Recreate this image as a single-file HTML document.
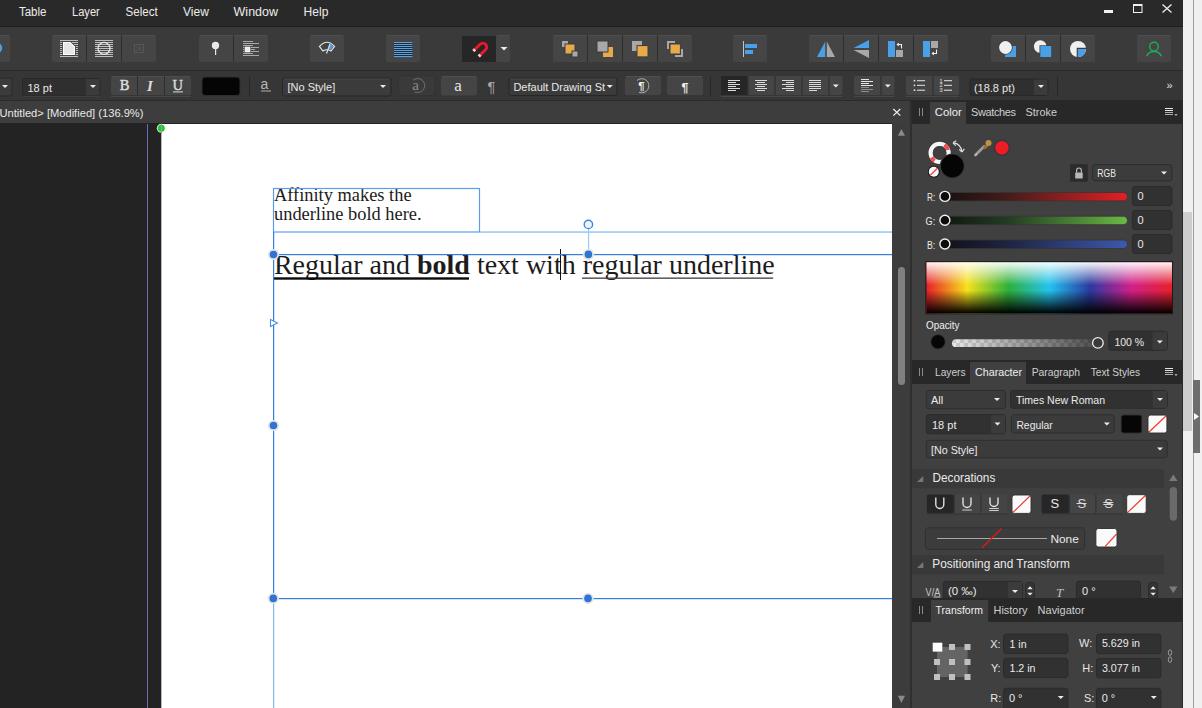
<!DOCTYPE html>
<html><head><meta charset="utf-8">
<style>
*{box-sizing:border-box;margin:0;padding:0}
html,body{width:1202px;height:708px;overflow:hidden;background:#393939;font-family:"Liberation Sans",sans-serif;color:#e6e6e6}
.a{position:absolute}
.t{position:absolute;white-space:pre;line-height:1}
#menubar{left:0;top:0;width:1183px;height:26px;background:#292929}
.menu{top:6px;font-size:12.3px;color:#ececec}
#toolbar{left:0;top:26px;width:1183px;height:45px;background:#3a3a3a;border-top:1px solid #1f1f1f;border-bottom:1px solid #2a2a2a}
#ctx{left:0;top:71px;width:1183px;height:30px;background:#363636;border-bottom:1px solid #2b2b2b}
.btn{position:absolute;background:#464646;border-radius:2px;box-shadow:inset 0 1px 0 #4d4d4d, 0 1px 0 #2e2e2e}
.div{position:absolute;width:1px;background:#333}
.dd{position:absolute;background:#2f2f2f;border:1px solid #262626;border-radius:3px;box-shadow:0 1px 0 #404040}
.arr{position:absolute;width:0;height:0;border-left:4px solid transparent;border-right:4px solid transparent;border-top:4px solid #e0e0e0}
</style></head><body>

<!-- Menu bar -->
<div class="a" id="menubar"></div>
<svg class="a" style="left:0;top:0" width="400" height="26" font-family="Liberation Sans, sans-serif" font-size="12" fill="#ececec">
 <text x="19" y="16.2" textLength="27.4" lengthAdjust="spacingAndGlyphs">Table</text>
 <text x="72" y="16.2" textLength="27.8" lengthAdjust="spacingAndGlyphs">Layer</text>
 <text x="125.6" y="16.2" textLength="32.2" lengthAdjust="spacingAndGlyphs">Select</text>
 <text x="183" y="16.2" textLength="25.8" lengthAdjust="spacingAndGlyphs">View</text>
 <text x="233.6" y="16.2" textLength="44.4" lengthAdjust="spacingAndGlyphs">Window</text>
 <text x="303.6" y="16.2" textLength="24.8" lengthAdjust="spacingAndGlyphs">Help</text>
</svg>

<!-- right light strip -->
<div class="a" style="left:1183px;top:0;width:19px;height:708px;background:#f0f0f0"></div>
<div class="a" style="left:1183px;top:212px;width:9px;height:219px;background:#cdcdcd"></div>
<div class="a" style="left:1193px;top:0;width:1px;height:708px;background:#a0a0a0"></div>
<div class="a" style="left:1193px;top:380px;width:7px;height:73px;background:#6d6d6d"></div>
<svg class="a" style="left:1190px;top:405px" width="12" height="20"><path d="M4 8 L9 11.5 L4 15 Z" fill="#fff"/></svg>

<!-- Toolbar -->
<div class="a" id="toolbar"></div>
<!-- Context bar -->
<div class="a" id="ctx"></div>
<!--TOOLBAR-->
<svg class="a" style="left:0;top:0" width="1183" height="101" viewBox="0 0 1183 101">
<defs>
 <linearGradient id="btng" x1="0" y1="0" x2="0" y2="1"><stop offset="0" stop-color="#4a4a4a"/><stop offset="0.08" stop-color="#464646"/><stop offset="1" stop-color="#434343"/></linearGradient>
</defs>
<g fill="#454545">
 <!-- toolbar button groups y 35-62 -->
 <rect x="-4" y="35" width="14" height="27" rx="2"/>
 <rect x="52" y="35" width="104" height="27" rx="2"/>
 <rect x="199" y="35" width="69" height="27" rx="2"/>
 <rect x="310" y="35" width="34" height="27" rx="2"/>
 <rect x="386" y="35" width="34" height="27" rx="2"/>
 <rect x="496" y="35" width="14" height="27" rx="2"/>
 <rect x="553" y="35" width="139" height="27" rx="2"/>
 <rect x="733" y="35" width="34" height="27" rx="2"/>
 <rect x="809" y="35" width="139" height="27" rx="2"/>
 <rect x="991" y="35" width="104" height="27" rx="2"/>
 <rect x="1137" y="35" width="34" height="27" rx="2"/>
</g>
<g fill="#4d4d4d">
 <rect x="0" y="35" width="9" height="1"/>
 <rect x="53" y="35" width="102" height="1"/>
 <rect x="200" y="35" width="67" height="1"/>
 <rect x="311" y="35" width="32" height="1"/>
 <rect x="387" y="35" width="32" height="1"/>
 <rect x="497" y="35" width="12" height="1"/>
 <rect x="554" y="35" width="137" height="1"/>
 <rect x="734" y="35" width="32" height="1"/>
 <rect x="810" y="35" width="137" height="1"/>
 <rect x="992" y="35" width="102" height="1"/>
 <rect x="1138" y="35" width="32" height="1"/>
</g>
<!-- magnet active button -->
<rect x="462" y="36" width="34" height="26" fill="#262626"/>
<!-- dividers -->
<g fill="#2e2e2e">
 <rect x="86" y="35" width="1" height="27"/><rect x="121" y="35" width="1" height="27"/>
 <rect x="233" y="35" width="1" height="27"/>
 <rect x="587" y="35" width="1" height="27"/><rect x="622" y="35" width="1" height="27"/><rect x="657" y="35" width="1" height="27"/>
 <rect x="843" y="35" width="1" height="27"/><rect x="878" y="35" width="1" height="27"/><rect x="913" y="35" width="1" height="27"/>
 <rect x="1025" y="35" width="1" height="27"/><rect x="1060" y="35" width="1" height="27"/>
</g>
<!-- partial blue icon at left -->
<path d="M-3 44 a4 4 0 1 1 0 8" fill="none" stroke="#4aa0e8" stroke-width="2.5"/>

<!-- icon: wrap page -->
<g fill="#bdbdbd">
 <rect x="60" y="40" width="18" height="1"/><rect x="60" y="42" width="18" height="1"/><rect x="60" y="44" width="18" height="1"/><rect x="60" y="46" width="18" height="1"/><rect x="60" y="48" width="18" height="1"/><rect x="60" y="50" width="18" height="1"/><rect x="60" y="52" width="18" height="1"/><rect x="60" y="54" width="18" height="1"/><rect x="60" y="56" width="18" height="1"/>
</g>
<path d="M63.5 42.5 H70 L74.5 47 V54.5 H63.5 Z" fill="#e6e6e6" stroke="#fff" stroke-width="1.2"/>
<path d="M62.5 41.5 H70.5 L75.5 46.5 V55.5 H62.5 Z" fill="none" stroke="#454545" stroke-width="0.8"/>
<!-- icon: wrap circle -->
<g fill="#bdbdbd">
 <rect x="95" y="40" width="18" height="1"/><rect x="95" y="42" width="18" height="1"/><rect x="95" y="44" width="18" height="1"/><rect x="95" y="46" width="18" height="1"/><rect x="95" y="48" width="18" height="1"/><rect x="95" y="50" width="18" height="1"/><rect x="95" y="52" width="18" height="1"/><rect x="95" y="54" width="18" height="1"/><rect x="95" y="56" width="18" height="1"/>
</g>
<circle cx="104" cy="48.3" r="6" fill="none" stroke="#e6e6e6" stroke-width="1.2"/>
<!-- icon: disabled x -->
<g opacity="0.35">
 <rect x="134.5" y="44.5" width="9" height="8" fill="none" stroke="#777" stroke-width="1"/>
 <path d="M136.5 46.5 L141.5 50.5 M141.5 46.5 L136.5 50.5" stroke="#777" stroke-width="1"/>
</g>
<!-- pin -->
<circle cx="215.5" cy="45.5" r="3.7" fill="#e8e8e8"/>
<rect x="215" y="46" width="1.2" height="9" fill="#e8e8e8"/>
<!-- wrap square icon -->
<g fill="#a8a8a8">
 <rect x="243" y="41" width="10" height="1"/><rect x="243" y="43" width="16" height="1"/><rect x="243" y="45" width="10" height="1"/>
 <rect x="251" y="47" width="8" height="1"/><rect x="251" y="49" width="4" height="1"/><rect x="251" y="51" width="8" height="1"/>
 <rect x="243" y="47" width="1" height="1"/><rect x="243" y="49" width="1" height="1"/><rect x="243" y="51" width="1" height="1"/>
 <rect x="243" y="53" width="10" height="1"/><rect x="243" y="55" width="16" height="1"/>
</g>
<rect x="245" y="47" width="5" height="5" fill="#ececec" stroke="#fff" stroke-width="0.6"/>
<!-- wiper icon -->
<path d="M319.5 46.5 Q327 38 334.5 46.5 L331 51 Q327 48.5 323 51 Z" fill="none" stroke="#e6e6e6" stroke-width="1.2"/>
<path d="M329.5 44 Q332.5 45 333.5 46.6 L330.5 50 Q329 49 328 49 Z" fill="#4aa0e8"/>
<path d="M330 44 L326.5 53.5" stroke="#e6e6e6" stroke-width="1.1"/>
<!-- blue lines icon -->
<rect x="394" y="42" width="18.5" height="15" fill="#1c1c1c"/>
<g fill="#5aa2e6">
 <rect x="394" y="42" width="18.5" height="1.1"/><rect x="394" y="44" width="18.5" height="1.1"/><rect x="394" y="46" width="18.5" height="1.1"/><rect x="394" y="48" width="18.5" height="1.1"/><rect x="394" y="50" width="18.5" height="1.1"/><rect x="394" y="52" width="18.5" height="1.1"/><rect x="394" y="54" width="18.5" height="1.1"/><rect x="394" y="56" width="18.5" height="1.1"/>
</g>
<!-- magnet -->
<path d="M473.4 51.03 L480.11 44.31 A3.8 3.8 0 0 1 485.49 49.69 L478.77 56.41" fill="none" stroke="#e8182f" stroke-width="3"/>
<path d="M473.4 51.03 L475 49.43 M478.77 56.41 L480.37 54.81" stroke="#e6dede" stroke-width="3"/>
<path d="M500.5 47 H507.5 L504 50.5 Z" fill="#f0f0f0"/>
<!-- arrange icons -->
<g stroke="#3c3c3c" stroke-width="1">
 <rect x="562" y="41" width="6" height="6" fill="#a8a8a8" stroke="none"/>
 <rect x="565" y="44" width="10" height="10" fill="#e8aa48"/>
 <rect x="572" y="51" width="6" height="6" fill="#a8a8a8"/>
 <rect x="603" y="47" width="10" height="10" fill="#e8aa48" stroke="none"/>
 <rect x="597" y="41" width="11" height="11" fill="#a8a8a8"/>
 <rect x="632" y="41" width="10" height="10" fill="#a8a8a8" stroke="none"/>
 <rect x="637" y="45.6" width="11" height="11.3" fill="#e8aa48"/>
 <rect x="667" y="41" width="3" height="3" fill="none" stroke="none"/>
</g>
<path d="M667 49 V41 H675 V43 H669 V49 Z" fill="#a8a8a8"/>
<path d="M683 49 V57 H675 V55 H681 V49 Z" fill="#a8a8a8"/>
<rect x="670" y="44" width="10.4" height="10" fill="#e8aa48" stroke="#3c3c3c" stroke-width="1"/>
<!-- align left icon -->
<rect x="743" y="41" width="1" height="16" fill="#c4c4c4"/>
<rect x="745" y="44" width="12" height="4" fill="#4aa0e8"/>
<rect x="745" y="50" width="8" height="4" fill="#4aa0e8"/>
<!-- flip h -->
<path d="M825.2 41.5 V57 H817 Z" fill="#4aa0e8"/>
<path d="M826.8 41.5 V57 H835 Z" fill="#a8a8a8"/>
<!-- flip v -->
<path d="M869 40 V48 H853.5 Z" fill="#4aa0e8"/>
<path d="M853.5 50 H869 V58 Z" fill="#a8a8a8"/>
<!-- rotate ccw -->
<rect x="888" y="41" width="7" height="16" fill="#4aa0e8"/>
<rect x="896" y="50" width="7" height="7" fill="#a8a8a8"/>
<path d="M901.5 48.5 V44.5 H898" fill="none" stroke="#f0f0f0" stroke-width="1.1"/>
<path d="M896.5 44.5 L898.8 42.5 V46.5 Z" fill="#f0f0f0"/>
<!-- rotate cw -->
<rect x="923" y="41" width="7" height="16" fill="#4aa0e8"/>
<rect x="931" y="41" width="7" height="7" fill="#a8a8a8"/>
<path d="M936.5 49.5 V53.5 H933" fill="none" stroke="#f0f0f0" stroke-width="1.1"/>
<path d="M931.5 53.5 L933.8 51.5 V55.5 Z" fill="#f0f0f0"/>
<!-- boolean add -->
<path d="M1005 46 H1016 V57 H1005 Z" fill="#4aa0e8"/>
<circle cx="1005.5" cy="47.5" r="7.2" fill="#3c3c3c"/>
<circle cx="1005.5" cy="47.5" r="6.4" fill="#f0f0f0"/>
<!-- boolean subtract -->
<circle cx="1040.2" cy="46.5" r="6.3" fill="#f0f0f0"/>
<rect x="1039.5" y="45.3" width="12" height="12" fill="#3c3c3c"/>
<rect x="1040.3" y="46" width="10.9" height="11" fill="#4aa0e8"/>
<!-- boolean intersect -->
<circle cx="1078" cy="49" r="8" fill="#f0f0f0"/>
<path d="M1077.3 57.5 V48.3 H1086.5" fill="none" stroke="#3c3c3c" stroke-width="1.2"/>
<path d="M1078 49 H1086 A8 8 0 0 1 1078 57 Z" fill="#4aa0e8"/>
<!-- person -->
<circle cx="1154" cy="46.6" r="4.3" fill="none" stroke="#1faa5a" stroke-width="1.4"/>
<path d="M1146.6 56.2 A8.2 8.2 0 0 1 1161.4 56.2" fill="none" stroke="#1faa5a" stroke-width="1.4"/>
<!-- window controls -->
<rect x="1104" y="10" width="9" height="3" fill="#f0f0f0"/>
<rect x="1133.5" y="4.5" width="8.5" height="8" fill="none" stroke="#f0f0f0" stroke-width="1"/>
<rect x="1133" y="4" width="9" height="2" fill="#f0f0f0"/>
<path d="M1162.5 4.5 L1171.5 12.5 M1171.5 4.5 L1162.5 12.5" stroke="#f0f0f0" stroke-width="1.3"/>
</svg>

<!--/TOOLBAR-->
<!--CTX-->
<svg class="a" style="left:0;top:0" width="1183" height="101" viewBox="0 0 1183 101" font-family="Liberation Sans, sans-serif">
<!-- field styles -->
<g>
 <!-- left partial dropdown -->
 <rect x="-6" y="78" width="18" height="18" rx="2.5" fill="#3b3b3b" stroke="#2a2a2a" stroke-width="1"/>
 <path d="M2 85 H8 L5 88 Z" fill="#ececec"/>
 <!-- font size combo -->
 <rect x="22.5" y="78.5" width="77.5" height="17.5" rx="2.5" fill="#2f2f2f" stroke="#282828" stroke-width="1"/>
 <rect x="86" y="79" width="13.5" height="16.5" fill="#3b3b3b"/>
 <path d="M90 85 H96 L93 88 Z" fill="#ececec"/>
 <text x="27.5" y="91.5" font-size="11" fill="#e8e8e8">18 pt</text>
 <rect x="23" y="96" width="77" height="1" fill="#3e3e3e"/>
 <!-- BIU -->
 <rect x="111" y="76" width="80" height="19" rx="2" fill="#454545"/>
 <rect x="112" y="76" width="78" height="1" fill="#4d4d4d"/>
 <rect x="111" y="96" width="80" height="1" fill="#474747"/>
 <rect x="137" y="76" width="1" height="19" fill="#2d2d2d"/>
 <rect x="164" y="76" width="1" height="19" fill="#2d2d2d"/>
 <text x="119.8" y="90.4" font-family="Liberation Serif" font-size="14.5" fill="#dcdcdc" stroke="#dcdcdc" stroke-width="0.5">B</text>
 <text x="147" y="90.6" font-family="Liberation Serif" font-style="italic" font-weight="bold" font-size="15" fill="#dcdcdc">I</text>
 <text x="172.6" y="90.2" font-family="Liberation Serif" font-size="14.5" fill="#dcdcdc" stroke="#dcdcdc" stroke-width="0.4">U</text>
 <rect x="173" y="91.4" width="10" height="1" fill="#dcdcdc"/>
 <!-- swatch -->
 <rect x="202" y="77" width="38" height="18.5" rx="3" fill="#050505" stroke="#2e2e2e" stroke-width="1"/>
 <!-- separator -->
 <rect x="249" y="77" width="1" height="19.5" fill="#262626"/>
 <!-- a underline -->
 <text x="260.6" y="89" font-family="Liberation Sans" font-size="14" fill="#b8b8b8">a</text>
 <rect x="261" y="90.5" width="10" height="1" fill="#b0b0b0"/>
 <!-- No style dropdown -->
 <rect x="282.5" y="78" width="108.5" height="18" rx="2.5" fill="#3b3b3b" stroke="#262626" stroke-width="1"/>
 <rect x="284" y="78.6" width="105.5" height="1" fill="#474747"/>
 <text x="287.5" y="90.6" font-size="11" fill="#e8e8e8">[No Style]</text>
 <path d="M380 85 H386 L383 88 Z" fill="#ececec"/>
 <!-- disabled circled a button -->
 <rect x="398.5" y="76" width="36.5" height="19.5" rx="2" fill="#3a3a3a" stroke="#333" stroke-width="1"/>
 <text x="412.3" y="90.3" font-family="Liberation Serif" font-size="15" fill="#8a8a8a">a</text>
 <path d="M413 80.3 A7 7 0 1 1 414.5 91.8" fill="none" stroke="#707070" stroke-width="1"/>
 <!-- a button -->
 <rect x="441" y="76" width="36" height="19.5" rx="2" fill="#454545"/>
 <rect x="442" y="76" width="34" height="1" fill="#4d4d4d"/>
 <text x="454.2" y="91.3" font-family="Liberation Serif" font-size="17" fill="#e6e6e6">a</text>
 <!-- pilcrow -->
 <text x="487.6" y="92" font-family="Liberation Sans" font-size="14.5" fill="#a8a8a8">¶</text>
 <!-- default drawing dropdown -->
 <rect x="509" y="78" width="108" height="17.5" rx="2.5" fill="#3b3b3b" stroke="#262626" stroke-width="1"/>
 <rect x="510.5" y="78.6" width="105" height="1" fill="#474747"/>
 <text x="513.4" y="90.6" font-size="11" fill="#e8e8e8">Default Drawing St</text>
 <path d="M606.8 85 H612.8 L609.8 88 Z" fill="#ececec"/>
 <!-- pilcrow circle button -->
 <rect x="625" y="76" width="36" height="19" rx="2" fill="#454545"/>
 <rect x="626" y="76" width="34" height="1" fill="#4f4f4f"/>
 <path d="M637 80.5 A7.1 7.1 0 1 1 639 92.3" fill="none" stroke="#b0b0b0" stroke-width="1"/>
 <text x="638.3" y="90.3" font-family="Liberation Sans" font-weight="bold" font-size="11.5" fill="#f0f0f0">¶</text>
 <!-- pilcrow button -->
 <rect x="667" y="76" width="36" height="19" rx="2" fill="#454545"/>
 <rect x="668" y="76" width="34" height="1" fill="#4f4f4f"/>
 <text x="681.5" y="91.8" font-family="Liberation Sans" font-weight="bold" font-size="12.5" fill="#f0f0f0">¶</text>
 <!-- separator -->
 <rect x="710" y="77" width="1" height="19.5" fill="#262626"/>
 <!-- align group -->
 <rect x="721" y="76" width="121.5" height="19" rx="2" fill="#454545"/>
 <rect x="721" y="96" width="121.5" height="1" fill="#474747"/>
 <rect x="721" y="76" width="26.5" height="19" fill="#262626"/>
 <rect x="747.5" y="76" width="1" height="19" fill="#2d2d2d"/>
 <rect x="774.5" y="76" width="1" height="19" fill="#2d2d2d"/>
 <rect x="801.5" y="76" width="1" height="19" fill="#2d2d2d"/>
 <rect x="828.5" y="76" width="1" height="19" fill="#2d2d2d"/>
 <g fill="#dcdcdc">
  <rect x="728" y="80" width="12" height="1"/><rect x="728" y="82" width="8" height="1"/><rect x="728" y="84" width="12" height="1"/><rect x="728" y="86" width="8" height="1"/><rect x="728" y="88" width="12" height="1"/><rect x="728" y="90" width="8" height="1"/>
  <rect x="755" y="80" width="12" height="1"/><rect x="757" y="82" width="8" height="1"/><rect x="755" y="84" width="12" height="1"/><rect x="757" y="86" width="8" height="1"/><rect x="755" y="88" width="12" height="1"/><rect x="757" y="90" width="8" height="1"/>
  <rect x="782" y="80" width="12" height="1"/><rect x="786" y="82" width="8" height="1"/><rect x="782" y="84" width="12" height="1"/><rect x="786" y="86" width="8" height="1"/><rect x="782" y="88" width="12" height="1"/><rect x="786" y="90" width="8" height="1"/>
  <rect x="809" y="80" width="12" height="1"/><rect x="809" y="82" width="12" height="1"/><rect x="809" y="84" width="12" height="1"/><rect x="809" y="86" width="12" height="1"/><rect x="809" y="88" width="12" height="1"/><rect x="809" y="90" width="8" height="1"/>
 </g>
 <path d="M832.8 84.5 H838.8 L835.8 87.5 Z" fill="#ececec"/>
 <!-- para group -->
 <rect x="854" y="76" width="40.5" height="19" rx="2" fill="#454545"/>
 <rect x="854" y="96" width="40.5" height="1" fill="#474747"/>
 <rect x="880.5" y="76" width="1" height="19" fill="#2d2d2d"/>
 <g fill="#e6e6e6">
  <rect x="861" y="79" width="8" height="1"/><rect x="861" y="81" width="12" height="1"/><rect x="861" y="83" width="8" height="1"/><rect x="861" y="85" width="12" height="1"/>
 </g>
 <g fill="#8c8c8c">
  <rect x="861" y="87" width="8" height="1"/><rect x="861" y="89" width="12" height="1"/><rect x="861" y="91" width="8" height="1"/>
 </g>
 <path d="M884.8 84.5 H890.8 L887.8 87.5 Z" fill="#ececec"/>
 <!-- list group -->
 <rect x="906" y="76" width="53" height="19" rx="2" fill="#454545"/>
 <rect x="906" y="96" width="53" height="1" fill="#474747"/>
 <rect x="932.5" y="76" width="1" height="19" fill="#2d2d2d"/>
 <g fill="#e6e6e6">
  <circle cx="914.5" cy="80.7" r="0.9"/><circle cx="914.5" cy="85.3" r="0.9"/><circle cx="914.5" cy="90.2" r="0.9"/>
  <rect x="917" y="80.2" width="8" height="1"/><rect x="917" y="84.8" width="8" height="1"/><rect x="917" y="89.7" width="8" height="1"/>
  <rect x="944" y="80.2" width="8" height="1"/><rect x="944" y="84.8" width="8" height="1"/><rect x="944" y="89.7" width="8" height="1"/>
 </g>
 <text x="939.4" y="82.6" font-size="5.5" fill="#e6e6e6">1</text>
 <text x="939.4" y="87.3" font-size="5.5" fill="#e6e6e6">2</text>
 <text x="939.4" y="92.1" font-size="5.5" fill="#e6e6e6">3</text>
 <!-- leading -->
 <rect x="970" y="79" width="78" height="16.5" rx="2.5" fill="#2f2f2f" stroke="#282828" stroke-width="1"/>
 <rect x="1034" y="79.5" width="13.5" height="15.5" fill="#3b3b3b"/>
 <path d="M1038 85 H1044 L1041 88 Z" fill="#ececec"/>
 <text x="973.9" y="92" font-size="11" fill="#e8e8e8">(18.8 pt)</text>
 <rect x="1057" y="77" width="1" height="19.5" fill="#262626"/>
 <text x="1166.5" y="88.6" font-size="11" fill="#e0e0e0">»</text>
</g>
</svg>

<!--/CTX-->

<!-- Doc tab -->
<div class="a" style="left:0;top:101px;width:909px;height:22px;background:#3d3d3d"></div>
<svg class="a" style="left:0;top:101px" width="300" height="22" font-family="Liberation Sans, sans-serif"><text x="-0.5" y="15.9" font-size="11" fill="#e8e8e8" textLength="144" lengthAdjust="spacingAndGlyphs">Untitled&gt; [Modified] (136.9%)</text></svg>

<!-- Canvas -->
<div class="a" style="left:0;top:123px;width:892px;height:585px;background:#232323"></div>
<div class="a" style="left:147px;top:124px;width:1px;height:584px;background:#6b6bb3"></div>
<!--CANVAS-->
<svg class="a" style="left:150px;top:123px" width="742" height="585" viewBox="150 123 742 585">
<rect x="150" y="123" width="742" height="585" fill="#232323"/>
<rect x="161" y="124" width="731" height="584" fill="#ffffff"/>
<rect x="161" y="124" width="1" height="584" fill="#b8b8b8"/>
<!-- text 1 -->
<g font-family="Liberation Serif" fill="#1c1c1c">
<text x="274" y="201.0" font-size="18.4">Affinity makes the</text>
<text x="274" y="220.1" font-size="18.4">underline bold here.</text>
<text x="273.9" y="274.0" font-size="28" xml:space="preserve">Regular and <tspan font-weight="bold">bold</tspan> text with regular underline</text>
</g>
<rect x="274" y="277.3" width="195" height="2.4" fill="#0a0a0a"/>
<rect x="582" y="277.5" width="191.2" height="1.3" fill="#3c3c3c"/>
<!-- caret -->
<rect x="560" y="249" width="1" height="31" fill="#111"/>
<!-- frame 1 -->
<rect x="273.5" y="188.5" width="206" height="43.5" fill="none" stroke="#5a9de8" stroke-width="1.2"/>
<rect x="480" y="231.4" width="412" height="1.3" fill="#86bdf0"/>
<!-- selection -->
<rect x="273" y="254" width="619" height="1.2" fill="#2f7ee0"/>
<rect x="273" y="598" width="619" height="1.2" fill="#2f7ee0"/>
<rect x="273" y="232" width="1.2" height="366" fill="#2f7ee0"/>
<rect x="273" y="599" width="1.2" height="109" fill="#7fb8ee"/>
<rect x="588" y="229" width="1.2" height="25" fill="#9ccaf2"/>
<!-- handles -->
<g>
 <circle cx="273.5" cy="254.5" r="5.6" fill="#e4e4e4"/><circle cx="273.5" cy="254.5" r="3.8" fill="#2f74d4"/>
 <circle cx="588.4" cy="254.4" r="5.6" fill="#e4e4e4"/><circle cx="588.4" cy="254.4" r="3.8" fill="#2f74d4"/>
 <circle cx="273.5" cy="425.5" r="5.6" fill="#e4e4e4"/><circle cx="273.5" cy="425.5" r="3.8" fill="#2f74d4"/>
 <circle cx="273.3" cy="598.4" r="5.6" fill="#e4e4e4"/><circle cx="273.3" cy="598.4" r="3.8" fill="#2f74d4"/>
 <circle cx="588" cy="598.4" r="5.6" fill="#e4e4e4"/><circle cx="588" cy="598.4" r="3.8" fill="#2f74d4"/>
 <circle cx="588.4" cy="224.4" r="4.2" fill="#eef5fd" stroke="#3a86e4" stroke-width="1.4"/>
</g>
<path d="M270.5 319.5 L277.5 323 L270.5 326.5 Z" fill="#fff" stroke="#4a90e2" stroke-width="1.1"/>
<!-- green dot -->
<circle cx="161.3" cy="128.3" r="4.5" fill="#f4f4f4" opacity="0.9"/>
<circle cx="161.3" cy="128.3" r="3.5" fill="#1ccc2a"/>
<rect x="161" y="124" width="1" height="10" fill="#9a9a9a"/>
</svg>

<!--/CANVAS-->
<div class="a" style="left:892px;top:123px;width:18px;height:585px;background:#3c3c3c"></div>
<svg class="a" style="left:892px;top:123px" width="18" height="585" viewBox="892 123 18 585">
 <path d="M901.4 129 L905 135.8 H897.9 Z" fill="#8a8a8a"/>
 <rect x="898" y="267" width="7" height="118" rx="3.5" fill="#808080"/>
 <path d="M897.8 695.8 H905 L901.4 702.9 Z" fill="#8a8a8a"/>
</svg>
<svg class="a" style="left:860px;top:101px" width="50" height="22" viewBox="860 101 50 22">
 <path d="M893.3 109 L900.3 115.6 M900.3 109 L893.3 115.6" stroke="#f0f0f0" stroke-width="1.2"/>
</svg>
<div class="a" style="left:910px;top:101px;width:2px;height:607px;background:#2f2f2f"></div>

<!-- Panels -->
<div class="a" style="left:912px;top:101px;width:271px;height:607px;background:#404040"></div>
<!--P1-->
<svg class="a" style="left:912px;top:100px" width="271" height="608" viewBox="912 100 271 608" font-family="Liberation Sans, sans-serif">
<defs>
 <linearGradient id="hue" x1="0" x2="1" y1="0" y2="0">
  <stop offset="0" stop-color="#e8202a"/><stop offset="0.166" stop-color="#f6e21a"/><stop offset="0.333" stop-color="#2db03a"/>
  <stop offset="0.5" stop-color="#23c3ee"/><stop offset="0.666" stop-color="#2a3aa0"/><stop offset="0.833" stop-color="#d2208a"/><stop offset="1" stop-color="#e8202a"/>
 </linearGradient>
 <linearGradient id="vshade" x1="0" x2="0" y1="0" y2="1">
  <stop offset="0" stop-color="#fff" stop-opacity="0.95"/><stop offset="0.45" stop-color="#fff" stop-opacity="0"/>
  <stop offset="0.55" stop-color="#000" stop-opacity="0"/><stop offset="1" stop-color="#000" stop-opacity="1"/>
 </linearGradient>
 <linearGradient id="rg" x1="0" x2="1"><stop offset="0" stop-color="#161010"/><stop offset="0.35" stop-color="#421c1a"/><stop offset="1" stop-color="#e32024"/></linearGradient>
 <linearGradient id="gg" x1="0" x2="1"><stop offset="0" stop-color="#101610"/><stop offset="0.35" stop-color="#233a22"/><stop offset="1" stop-color="#6ab944"/></linearGradient>
 <linearGradient id="bg" x1="0" x2="1"><stop offset="0" stop-color="#101016"/><stop offset="0.35" stop-color="#1e2340"/><stop offset="1" stop-color="#3d59ad"/></linearGradient>
 <linearGradient id="og" x1="0" x2="1"><stop offset="0" stop-color="#e8e8e8"/><stop offset="0.5" stop-color="#9a9a9a"/><stop offset="1" stop-color="#4a4a4a"/></linearGradient>
 <pattern id="chk" width="8" height="8" patternUnits="userSpaceOnUse" x="952" y="339"><rect width="8" height="8" fill="#000" opacity="0"/><rect width="4" height="4" fill="#000" opacity="0.12"/><rect x="4" y="4" width="4" height="4" fill="#000" opacity="0.12"/></pattern>
</defs>
<!-- tab bar -->
<rect x="912" y="100.5" width="271" height="23.5" fill="#282828"/>
<rect x="930" y="102" width="36" height="22" fill="#404040"/>
<rect x="919" y="108" width="1" height="8" fill="#8a8a8a"/><rect x="922" y="108" width="1" height="8" fill="#8a8a8a"/>
<text x="934.8" y="116" font-size="11" fill="#f0f0f0" textLength="27" lengthAdjust="spacingAndGlyphs">Color</text>
<text x="971" y="116" font-size="11" fill="#cfcfcf" textLength="45">Swatches</text>
<text x="1025.6" y="116" font-size="11" fill="#cfcfcf" textLength="31.4" lengthAdjust="spacingAndGlyphs">Stroke</text>
<g fill="#e6e6e6"><rect x="1165" y="108" width="8" height="1"/><rect x="1165" y="110" width="8" height="1"/></g>
<g fill="#b0b0b0"><rect x="1165" y="112" width="8" height="1"/><rect x="1165" y="114" width="8" height="1"/></g>
<path d="M1174.5 114.2 H1177.5 L1176 116 Z" fill="#d0d0d0"/>
<rect x="1182" y="100" width="1" height="608" fill="#2a2a2a"/>
<!-- panel body -->
<rect x="912" y="124" width="270" height="236" fill="#404040"/>
<!-- stroke ring -->
<circle cx="939.6" cy="152.9" r="12" fill="#3a3a3a"/>
<circle cx="939.6" cy="152.9" r="9" fill="none" stroke="#f6f6f6" stroke-width="4.2"/>
<path d="M944.5 144.9 A9 9 0 0 1 948 150" fill="none" stroke="#f05050" stroke-width="4.2"/>
<path d="M931.5 157.5 A9 9 0 0 0 934.5 161" fill="none" stroke="#f05050" stroke-width="4.2"/>
<circle cx="939.6" cy="152.9" r="6.8" fill="#3f3f3f"/>
<!-- swap arrows -->
<path d="M953.5 142.8 Q960.5 143.5 962 151.5" fill="none" stroke="#e0e0e0" stroke-width="1.2"/>
<path d="M953 142.8 L956.2 140.8 M953 142.8 L955.8 145.6" stroke="#e0e0e0" stroke-width="1.2"/>
<path d="M962 152 L959.2 149.4 M962 152 L964.3 148.9" stroke="#e0e0e0" stroke-width="1.2"/>
<!-- fill circle -->
<circle cx="952.3" cy="166" r="12.6" fill="#383838"/>
<circle cx="952.3" cy="166" r="11.4" fill="#050505"/>
<!-- none circle -->
<circle cx="933.8" cy="171.8" r="6" fill="#151515"/>
<circle cx="933.8" cy="171.8" r="5" fill="#f8f8f8"/>
<path d="M930.2 175.4 L937.4 168.2" stroke="#f03a3a" stroke-width="1.3"/>
<!-- eyedropper -->
<path d="M975.5 155 L984 146.5" stroke="#9a9a9a" stroke-width="2.8" stroke-linecap="round"/>
<path d="M975 155.6 L977 153.6" stroke="#c8c8c8" stroke-width="1.2"/>
<path d="M983 147.5 L986.5 144 L988.5 146 L985 149.5 Z" fill="#a07028"/>
<circle cx="988.5" cy="143" r="3" fill="#c09040"/>
<!-- red circle -->
<circle cx="1001.9" cy="147.8" r="8.2" fill="#383838"/>
<circle cx="1001.9" cy="147.8" r="6.8" fill="#ee1c24"/>
<!-- lock -->
<rect x="1070" y="164.2" width="17.8" height="17.6" fill="#2c2c2c"/>
<rect x="1075.2" y="172.5" width="7.5" height="6" rx="0.6" fill="#b8b8b8"/>
<path d="M1076.6 172.8 V170.4 A2.4 2.4 0 0 1 1081.4 170.4 V172.8" fill="none" stroke="#b8b8b8" stroke-width="1.2"/>
<!-- RGB dropdown -->
<rect x="1092.5" y="164.6" width="79.4" height="16.3" rx="2.5" fill="#3c3c3c" stroke="#2c2c2c" stroke-width="1"/>
<text x="1097.3" y="177" font-size="11" fill="#eaeaea" textLength="18.6" lengthAdjust="spacingAndGlyphs">RGB</text>
<path d="M1161 171.5 H1167 L1164 174.5 Z" fill="#ececec"/>
<!-- sliders -->
<g font-size="10" fill="#ececec">
 <text x="927" y="200.9" textLength="8.2" lengthAdjust="spacingAndGlyphs">R:</text>
 <text x="925.6" y="224.7" textLength="9.6" lengthAdjust="spacingAndGlyphs">G:</text>
 <text x="927" y="248.5" textLength="8.2" lengthAdjust="spacingAndGlyphs">B:</text>
</g>
<rect x="941" y="192.4" width="186.5" height="8.5" rx="4.25" fill="url(#rg)" stroke="#353535" stroke-width="0.8"/>
<rect x="941" y="216.2" width="186.5" height="8.5" rx="4.25" fill="url(#gg)" stroke="#353535" stroke-width="0.8"/>
<rect x="941" y="240" width="186.5" height="8.5" rx="4.25" fill="url(#bg)" stroke="#353535" stroke-width="0.8"/>
<g fill="#0c0c0c" stroke="#f0f0f0" stroke-width="1.4">
 <circle cx="944.9" cy="196.4" r="5"/><circle cx="944.9" cy="220.2" r="5"/><circle cx="944.9" cy="244" r="5"/>
</g>
<g>
 <rect x="1132.3" y="186.4" width="39.7" height="19.2" rx="2.5" fill="#313131" stroke="#2a2a2a" stroke-width="0.8"/>
 <rect x="1132.3" y="210.4" width="39.7" height="19.2" rx="2.5" fill="#313131" stroke="#2a2a2a" stroke-width="0.8"/>
 <rect x="1132.3" y="234.4" width="39.7" height="19.2" rx="2.5" fill="#313131" stroke="#2a2a2a" stroke-width="0.8"/>
 <text x="1137.5" y="200.3" font-size="11" fill="#eaeaea">0</text>
 <text x="1137.5" y="224.3" font-size="11" fill="#eaeaea">0</text>
 <text x="1137.5" y="248.3" font-size="11" fill="#eaeaea">0</text>
</g>
<!-- spectrum -->
<rect x="925.4" y="261.2" width="247.6" height="53.1" fill="#1a1a1a"/>
<rect x="926.5" y="262.3" width="245.5" height="51" fill="url(#hue)"/>
<rect x="926.5" y="262.3" width="245.5" height="51" fill="url(#vshade)"/>
<!-- opacity -->
<text x="926" y="329.2" font-size="10.2" fill="#f0f0f0" textLength="33.5" lengthAdjust="spacingAndGlyphs">Opacity</text>
<circle cx="938" cy="341.8" r="7.6" fill="#333"/>
<circle cx="938" cy="341.8" r="6.8" fill="#060606"/>
<rect x="952" y="339.3" width="147" height="7.8" rx="3.9" fill="url(#og)"/>
<rect x="952" y="339.3" width="147" height="7.8" rx="3.9" fill="url(#chk)"/>
<circle cx="1097.9" cy="342.9" r="5.3" fill="#3a3a3a" stroke="#f0f0f0" stroke-width="1.3"/>
<rect x="1108.7" y="331.2" width="58.7" height="19.2" rx="2.5" fill="#313131" stroke="#2a2a2a" stroke-width="0.8"/>
<rect x="1152.5" y="331.8" width="14.5" height="18" fill="#3b3b3b"/>
<text x="1114.4" y="345.8" font-size="11" fill="#eaeaea" textLength="29.8" lengthAdjust="spacingAndGlyphs">100 %</text>
<path d="M1156.8 340.5 H1162.8 L1159.8 343.5 Z" fill="#ececec"/>
</svg>

<!--/P1-->
<!--P2-->
<svg class="a" style="left:912px;top:360px" width="271" height="238" viewBox="912 360 271 238" font-family="Liberation Sans, sans-serif">
<rect x="912" y="360" width="270" height="238" fill="#404040"/>
<!-- tab bar -->
<rect x="912" y="360" width="270" height="24" fill="#282828"/>
<rect x="970" y="362" width="56" height="22" fill="#404040"/>
<rect x="919" y="368" width="1" height="8" fill="#8a8a8a"/><rect x="922" y="368" width="1" height="8" fill="#8a8a8a"/>
<text x="935" y="375.8" font-size="11" fill="#cfcfcf" textLength="30.6" lengthAdjust="spacingAndGlyphs">Layers</text>
<text x="975" y="375.8" font-size="11" fill="#f0f0f0" textLength="47" lengthAdjust="spacingAndGlyphs">Character</text>
<text x="1031.7" y="375.8" font-size="11" fill="#cfcfcf" textLength="48.4" lengthAdjust="spacingAndGlyphs">Paragraph</text>
<text x="1090.7" y="375.8" font-size="11" fill="#cfcfcf" textLength="49.4" lengthAdjust="spacingAndGlyphs">Text Styles</text>
<g fill="#e6e6e6"><rect x="1165" y="368" width="8" height="1"/><rect x="1165" y="370" width="8" height="1"/></g>
<g fill="#b0b0b0"><rect x="1165" y="372" width="8" height="1"/><rect x="1165" y="374" width="8" height="1"/></g>
<path d="M1174.5 374.2 H1177.5 L1176 376 Z" fill="#d0d0d0"/>
<!-- row 1 -->
<rect x="926.3" y="390.4" width="79.1" height="18.3" rx="2.5" fill="#3b3b3b" stroke="#2c2c2c" stroke-width="0.9"/>
<text x="931" y="403.9" font-size="11" fill="#eaeaea">All</text>
<path d="M994 398 H1000 L997 401 Z" fill="#ececec"/>
<rect x="1010.5" y="390.5" width="156.8" height="17.8" rx="2.5" fill="#313131" stroke="#2a2a2a" stroke-width="0.9"/>
<rect x="1152.7" y="391" width="14.2" height="17" fill="#3b3b3b"/>
<text x="1015.9" y="403.9" font-size="11" fill="#eaeaea" textLength="89.2" lengthAdjust="spacingAndGlyphs">Times New Roman</text>
<path d="M1157 398 H1163 L1160 401 Z" fill="#ececec"/>
<!-- row 2 -->
<rect x="926.3" y="414.6" width="79.1" height="19.2" rx="2.5" fill="#313131" stroke="#2a2a2a" stroke-width="0.9"/>
<rect x="991" y="415.1" width="14" height="18.2" fill="#3b3b3b"/>
<text x="932" y="428.7" font-size="11" fill="#eaeaea">18 pt</text>
<path d="M994.5 422.5 H1000.5 L997.5 425.5 Z" fill="#ececec"/>
<rect x="1011.5" y="414.8" width="102.7" height="18.2" rx="2.5" fill="#3b3b3b" stroke="#2c2c2c" stroke-width="0.9"/>
<text x="1016.4" y="428.7" font-size="11" fill="#eaeaea" textLength="36.3" lengthAdjust="spacingAndGlyphs">Regular</text>
<path d="M1103.9 422.5 H1109.9 L1106.9 425.5 Z" fill="#ececec"/>
<rect x="1121.2" y="415.1" width="20.6" height="17.9" rx="2.5" fill="#060606" stroke="#2c2c2c" stroke-width="0.9"/>
<rect x="1148" y="415.1" width="18.9" height="17.9" rx="2.5" fill="#fafafa" stroke="#2c2c2c" stroke-width="0.9"/>
<path d="M1148.8 432.2 L1166.2 415.8" stroke="#f03a30" stroke-width="1.2"/>
<!-- row 3 -->
<rect x="926.3" y="440.3" width="240.9" height="17.5" rx="2.5" fill="#3b3b3b" stroke="#2c2c2c" stroke-width="0.9"/>
<text x="931" y="453.5" font-size="11" fill="#eaeaea" textLength="46.5" lengthAdjust="spacingAndGlyphs">[No Style]</text>
<path d="M1157 447.5 H1163 L1160 450.5 Z" fill="#ececec"/>
<!-- decorations header -->
<rect x="912" y="469.2" width="252" height="19" fill="#393939"/>
<path d="M917 482 L923.3 476 V482 Z" fill="#777"/>
<text x="932.5" y="481.9" font-size="12" fill="#eaeaea" textLength="62.8" lengthAdjust="spacingAndGlyphs">Decorations</text>
<!-- U group -->
<rect x="926.8" y="494.6" width="80.5" height="18.8" rx="2" fill="#454545"/>
<rect x="926.8" y="494.6" width="27" height="18.8" rx="2" fill="#262626"/>
<rect x="953.7" y="494.6" width="1" height="18.8" fill="#333"/>
<rect x="980.5" y="494.6" width="1" height="18.8" fill="#333"/>
<rect x="926.8" y="513.6" width="80.5" height="1" fill="#363636"/>
<g fill="none" stroke="#e6e6e6" stroke-width="1.35">
 <path d="M935.8 497.5 V504.5 A4 4 0 0 0 943.8 504.5 V497.5"/>
 <path d="M963 497.5 V503.5 A4 4 0 0 0 971 503.5 V497.5"/>
 <path d="M990 497.5 V502.5 A4 4 0 0 0 998 502.5 V497.5"/>
</g>
<rect x="962.3" y="509.5" width="9.4" height="1" fill="#d0d0d0"/>
<rect x="989.3" y="508" width="9.4" height="1" fill="#d0d0d0"/><rect x="989.3" y="510" width="9.4" height="1" fill="#d0d0d0"/>
<rect x="1012" y="495" width="19" height="18.4" rx="2.5" fill="#fafafa" stroke="#2c2c2c" stroke-width="0.9"/>
<path d="M1012.8 512.6 L1030.2 495.8" stroke="#f03a30" stroke-width="1.2"/>
<!-- S group -->
<rect x="1041.5" y="494.4" width="81.2" height="19" rx="2" fill="#454545"/>
<rect x="1041.5" y="494.4" width="27.3" height="19" rx="2" fill="#262626"/>
<rect x="1068.8" y="494.4" width="1" height="19" fill="#2d2d2d"/>
<rect x="1095.4" y="494.4" width="1" height="19" fill="#2d2d2d"/>
<rect x="1041.5" y="513.6" width="81.2" height="1" fill="#363636"/>
<text x="1050.6" y="508.3" font-size="13" fill="#eaeaea">S</text>
<text x="1077.5" y="508.3" font-size="13" fill="#dadada">S</text>
<rect x="1076.5" y="503" width="10" height="1" fill="#dadada"/>
<text x="1104.3" y="508.3" font-size="13" fill="#dadada">S</text>
<rect x="1103.3" y="502" width="10" height="1" fill="#dadada"/><rect x="1103.3" y="504" width="10" height="1" fill="#dadada"/>
<rect x="1126.7" y="494.7" width="19.5" height="18.7" rx="2.5" fill="#fafafa" stroke="#2c2c2c" stroke-width="0.9"/>
<path d="M1127.5 512.6 L1145.4 495.5" stroke="#f03a30" stroke-width="1.2"/>
<!-- line style box -->
<rect x="925.4" y="527.8" width="159.2" height="21.5" rx="2.5" fill="#3c3c3c" stroke="#2e2e2e" stroke-width="0.9"/>
<rect x="937" y="538" width="110" height="1" fill="#a8a8a8"/>
<path d="M982 547.8 L1001.7 528.5" stroke="#e21818" stroke-width="1.3"/>
<text x="1050.4" y="542.6" font-size="11.5" fill="#eaeaea" textLength="28.4" lengthAdjust="spacingAndGlyphs">None</text>
<rect x="1095.9" y="528.5" width="21.1" height="18.5" rx="2.5" fill="#fafafa" stroke="#2c2c2c" stroke-width="0.9"/>
<path d="M1105 546.6 L1116.6 534" stroke="#f03a30" stroke-width="1.2"/>
<!-- positioning header -->
<rect x="912" y="555.2" width="252" height="19.2" fill="#393939"/>
<path d="M917 568 L923.3 562 V568 Z" fill="#777"/>
<text x="932.3" y="567.5" font-size="12" fill="#eaeaea" textLength="137.6" lengthAdjust="spacingAndGlyphs">Positioning and Transform</text>
<!-- kerning row -->
<text x="925.6" y="596" font-size="11" fill="#c8c8c8" textLength="14.8" lengthAdjust="spacingAndGlyphs">V/A</text>
<rect x="933.5" y="596.5" width="7" height="1" fill="#c8c8c8"/>
<rect x="943.3" y="581.4" width="79.3" height="20" rx="2.5" fill="#313131" stroke="#2a2a2a" stroke-width="0.9"/>
<rect x="1007.8" y="582" width="14.3" height="19" fill="#3b3b3b"/>
<text x="948" y="594.9" font-size="11" fill="#eaeaea" textLength="28.6" lengthAdjust="spacingAndGlyphs">(0 ‰)</text>
<path d="M1012 590 H1018 L1015 593 Z" fill="#ececec"/>
<rect x="1025.5" y="582.4" width="9" height="19" rx="2.5" fill="#353535" stroke="#2a2a2a" stroke-width="0.9"/>
<path d="M1027.3 589.2 L1030 586.2 L1032.7 589.2 Z M1027.3 592.7 H1032.7 L1030 595.5 Z" fill="#ececec"/>
<text x="1056" y="596.5" font-family="Liberation Serif" font-style="italic" font-size="13" fill="#bdbdbd">T</text>
<rect x="1076.4" y="581.1" width="64.1" height="20" rx="2.5" fill="#313131" stroke="#2a2a2a" stroke-width="0.9"/>
<text x="1082" y="594.6" font-size="11" fill="#eaeaea">0 °</text>
<rect x="1148.6" y="582.4" width="9" height="19" rx="2.5" fill="#353535" stroke="#2a2a2a" stroke-width="0.9"/>
<path d="M1150.4 589.2 L1153.1 586.2 L1155.8 589.2 Z M1150.4 592.7 H1155.8 L1153.1 595.5 Z" fill="#ececec"/>
<!-- scrollbar -->
<path d="M1173.3 474.5 L1177.5 481 H1169.1 Z" fill="#7a7a7a"/>
<rect x="1169.7" y="487" width="7.3" height="33.7" rx="3.6" fill="#6a6a6a"/>
<path d="M1169.1 586.5 H1177.5 L1173.3 593 Z" fill="#7a7a7a"/>
</svg>

<!--/P2-->
<!--P3-->
<svg class="a" style="left:912px;top:598px" width="271" height="110" viewBox="912 598 271 110" font-family="Liberation Sans, sans-serif">
<rect x="912" y="598" width="270" height="110" fill="#404040"/>
<rect x="912" y="598" width="270" height="24" fill="#282828"/>
<rect x="931" y="600" width="57.2" height="22" fill="#404040"/>
<rect x="919" y="606" width="1" height="8" fill="#8a8a8a"/><rect x="922" y="606" width="1" height="8" fill="#8a8a8a"/>
<text x="935.6" y="613.8" font-size="11" fill="#f0f0f0" textLength="47.3" lengthAdjust="spacingAndGlyphs">Transform</text>
<text x="993.5" y="613.8" font-size="11" fill="#cfcfcf" textLength="34" lengthAdjust="spacingAndGlyphs">History</text>
<text x="1037.6" y="613.8" font-size="11" fill="#cfcfcf" textLength="47" lengthAdjust="spacingAndGlyphs">Navigator</text>
<!-- anchor grid -->
<rect x="937" y="647" width="30.6" height="30" fill="#646464"/>
<g fill="#c0c0c0">
 <rect x="949" y="644" width="6" height="6"/><rect x="964.5" y="644" width="6" height="6"/>
 <rect x="934" y="659" width="6" height="6"/><rect x="949" y="659" width="6" height="6"/><rect x="964.5" y="659" width="6" height="6"/>
 <rect x="934" y="674" width="6" height="6"/><rect x="949" y="674" width="6" height="6"/><rect x="964.5" y="674" width="6" height="6"/>
</g>
<rect x="932.7" y="642.7" width="9.6" height="8.9" fill="#ffffff"/>
<!-- labels -->
<g font-size="11" fill="#e6e6e6">
 <text x="990.2" y="647.6">X:</text>
 <text x="990.9" y="671.9">Y:</text>
 <text x="990.2" y="702">R:</text>
 <text x="1079.1" y="647.3">W:</text>
 <text x="1082.3" y="671.7">H:</text>
 <text x="1084" y="701.8">S:</text>
</g>
<g fill="#313131" stroke="#2a2a2a" stroke-width="0.9">
 <rect x="1003.5" y="634" width="64.4" height="19.6" rx="2.5"/>
 <rect x="1003.5" y="658.3" width="64.4" height="19.3" rx="2.5"/>
 <rect x="1003.5" y="688.2" width="64.4" height="22" rx="2.5"/>
 <rect x="1096.4" y="634.1" width="64.5" height="19.6" rx="2.5"/>
 <rect x="1096.4" y="658.4" width="64.5" height="19.4" rx="2.5"/>
 <rect x="1096.4" y="688.3" width="64.5" height="22" rx="2.5"/>
</g>
<g font-size="11" fill="#eaeaea">
 <text x="1009.5" y="647.6" textLength="17.1" lengthAdjust="spacingAndGlyphs">1 in</text>
 <text x="1009.5" y="671.9" textLength="26" lengthAdjust="spacingAndGlyphs">1.2 in</text>
 <text x="1008.9" y="702">0 °</text>
 <text x="1101.9" y="647.3" textLength="38.2" lengthAdjust="spacingAndGlyphs">5.629 in</text>
 <text x="1101.9" y="671.7" textLength="38.2" lengthAdjust="spacingAndGlyphs">3.077 in</text>
 <text x="1101.7" y="701.8">0 °</text>
</g>
<path d="M1057.8 696 H1063.8 L1060.8 699 Z M1150.8 696 H1156.8 L1153.8 699 Z" fill="#ececec"/>
<!-- chain -->
<ellipse cx="1170" cy="652.6" rx="1.7" ry="2.8" fill="none" stroke="#9a9a9a" stroke-width="1"/>
<ellipse cx="1170" cy="659.6" rx="1.7" ry="2.8" fill="none" stroke="#9a9a9a" stroke-width="1"/>
</svg>

<!--/P3-->


</body></html>
